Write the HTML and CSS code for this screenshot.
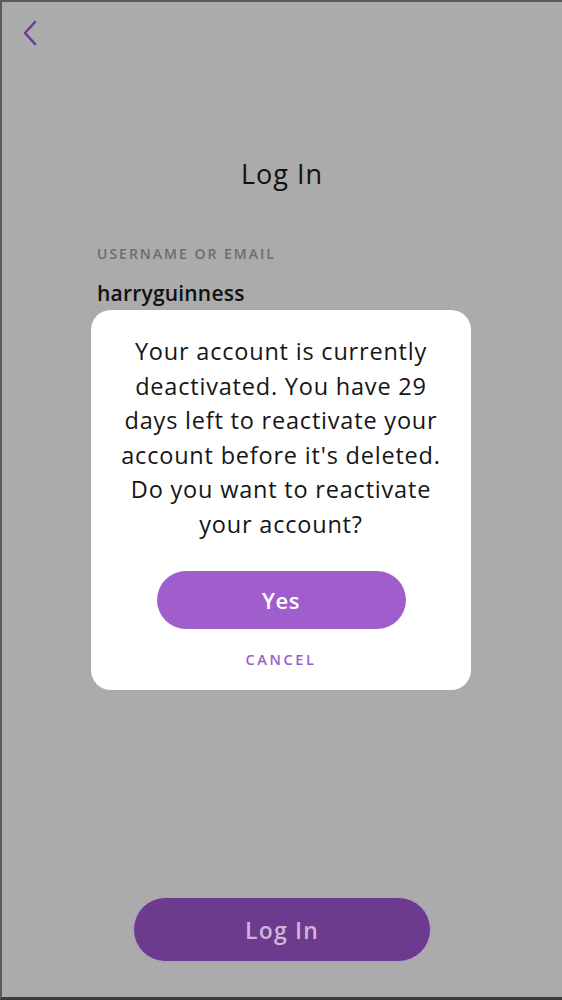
FILE: index.html
```html
<!DOCTYPE html>
<html>
<head>
<meta charset="utf-8">
<link rel="stylesheet" href="styles.css">
</head>
<body>
<div class="screen">
  <div class="topbar">
    <svg class="back" width="18" height="28" viewBox="0 0 18 28"><path d="M14 3 L4 14 L14 25" fill="none" stroke="#6b3d99" stroke-width="2.6" stroke-linecap="round" stroke-linejoin="round"/></svg>
  </div>
  <h1 class="title">Log In</h1>
  <div class="field">
    <div class="label">USERNAME OR EMAIL</div>
    <div class="value">harryguinness</div>
  </div>
  <div class="spacer"></div>
  <div class="bottom">
    <button class="login">Log In</button>
  </div>

  <div class="dialog">
    <p class="msg">Your account is currently<br>deactivated. You have 29<br>days left to reactivate your<br>account before it's deleted.<br>Do you want to reactivate<br>your account?</p>
    <button class="yes">Yes</button>
    <div class="cancel">CANCEL</div>
  </div>
</div>
</body>
</html>
```

FILE: styles.css
```css
* { box-sizing: border-box; }
html, body { margin: 0; padding: 0; }
body {
  width: 562px;
  height: 1000px;
  background: #ababab;
  font-family: "Open Sans", Lato, sans-serif;
  overflow: hidden;
}
.screen {
  position: relative;
  width: 562px;
  height: 1000px;
  background: #ababab;
  border-top: 2px solid #5a5a5a;
  border-left: 2px solid #5a5a5a;
  border-bottom: 3px solid #3a3a3a;
  display: flex;
  flex-direction: column;
}
.topbar {
  height: 48px;
  padding: 17px 0 0 19px;
}
.back { display: block; }
.title {
  margin: 107px 0 0;
  text-align: center;
  font-size: 27px;
  font-weight: 500;
  color: #111;
  line-height: 34px;
  letter-spacing: 1px;
}
.field {
  margin-top: 54px;
  padding-left: 95px;
}
.label {
  font-size: 14px;
  font-weight: 600;
  color: #6d6d6d;
  letter-spacing: 2px;
  line-height: 18px;
}
.value {
  margin-top: 17px;
  font-size: 21px;
  font-weight: 600;
  color: #111;
  line-height: 26px;
  letter-spacing: 0.2px;
}
.spacer { flex: 1; }
.bottom {
  display: flex;
  justify-content: center;
  padding: 0 0 35px 0;
}
.login {
  width: 298px;
  height: 65px;
  border-radius: 33px;
  border: 1px solid #b99bcb;
  background: #6c3b8e;
  color: #cbb8d6;
  font-family: inherit;
  font-size: 23px;
  font-weight: 600;
  letter-spacing: 1.2px;
}
.dialog {
  position: absolute;
  left: 89px;
  top: 308px;
  width: 380px;
  height: 380px;
  background: #fff;
  border-radius: 20px;
  display: flex;
  flex-direction: column;
  align-items: center;
  padding: 24px 10px 0;
}
.msg {
  margin: 0;
  text-align: center;
  font-size: 23.5px;
  line-height: 34.5px;
  color: #161616;
  font-weight: 500;
  letter-spacing: 0.8px;
  white-space: nowrap;
}
.yes {
  margin-top: 30px;
  width: 249px;
  height: 58px;
  border-radius: 29px;
  border: none;
  background: #9f5ecc;
  color: #fff;
  font-family: inherit;
  font-size: 22px;
  font-weight: 600;
  letter-spacing: 0.5px;
}
.cancel {
  margin-top: 21px;
  font-size: 14.5px;
  font-weight: 600;
  color: #9b5ec6;
  letter-spacing: 2.6px;
}
```
